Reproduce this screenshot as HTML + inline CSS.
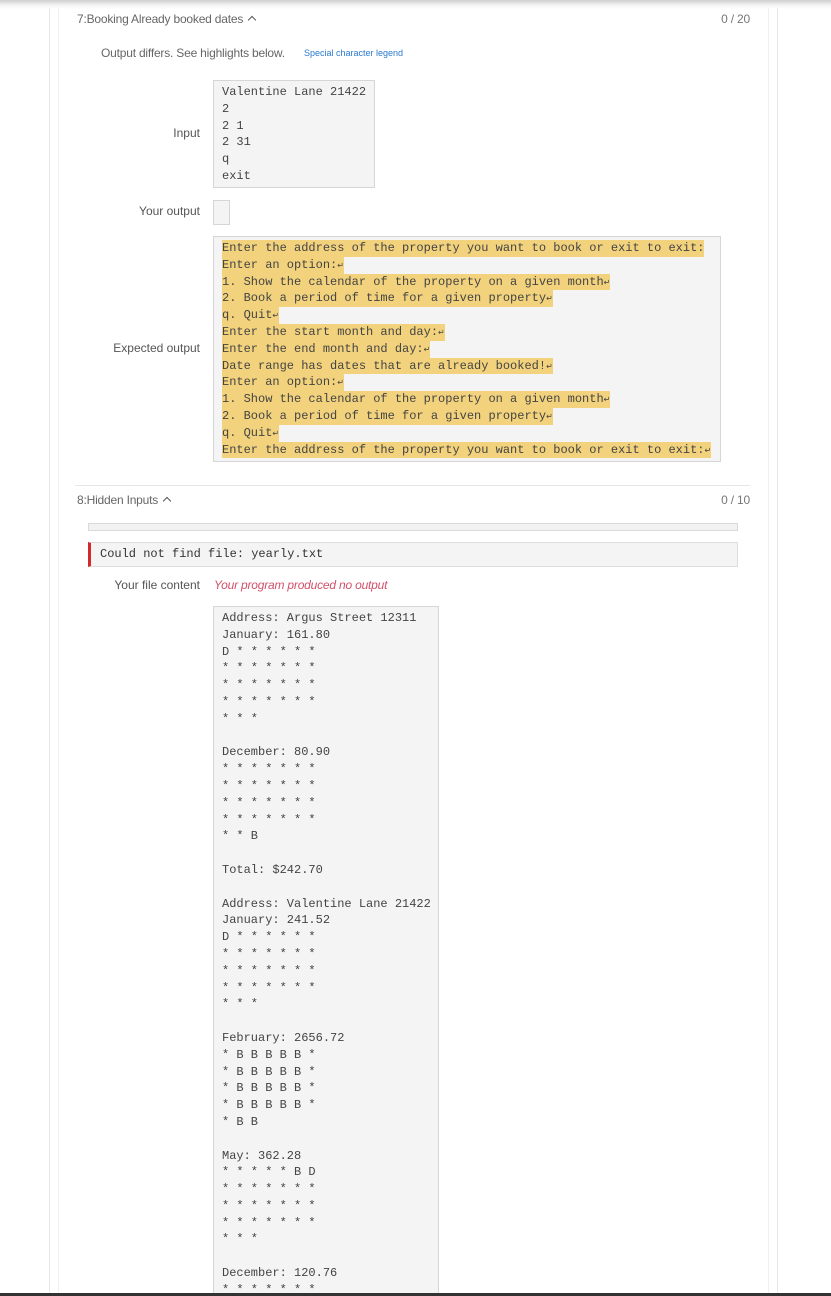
<!DOCTYPE html>
<html><head><meta charset="utf-8"><style>
*{margin:0;padding:0;box-sizing:border-box}
html,body{width:831px;height:1296px;overflow:hidden;background:#fff;font-family:"Liberation Sans",sans-serif;color:#666;position:relative}
.abs{position:absolute}
.vl{position:absolute;top:8px;height:1288px;width:1px;background:#e8e8e8}
.topsh{position:absolute;left:0;top:0;width:831px;height:9px;background:linear-gradient(#cfcfcf,#f4f4f4 60%,#fff)}
.bot{position:absolute;left:0;top:1293px;width:831px;height:3px;background:#333;z-index:5}
.lbl{position:absolute;font-size:12px;color:#555;text-align:right;width:200px;left:0}
.box{position:absolute;background:#f4f4f4;border:1px solid #d6d6d6;padding:3px 8px;font-family:"Liberation Mono","DejaVu Sans Mono",monospace;font-size:12px;line-height:16.8px;color:#444;white-space:pre;overflow:hidden}
.hl{background:#f2d27c;display:inline-block;height:16.8px}
.rt{font-family:"DejaVu Sans",sans-serif;font-size:8px}
.hdr{position:absolute;font-size:12px;color:#666;letter-spacing:-0.2px}
.car{display:inline-block;width:6px;height:6px;border-left:1.6px solid #555;border-top:1.6px solid #555;transform:rotate(45deg);margin-left:6px;position:relative;top:0px}
</style></head><body>
<div class="topsh"></div>
<div class="vl" style="left:49px"></div>
<div class="vl" style="left:58px;background:#f0f0f0"></div>
<div class="vl" style="left:768px;background:#f0f0f0"></div>
<div class="vl" style="left:777px"></div>

<div class="hdr" style="left:77px;top:12px">7:Booking Already booked dates<span class="car"></span></div>
<div class="hdr" style="left:690px;width:60px;text-align:right;top:12px;color:#777">0 / 20</div>
<div class="abs" style="left:101px;top:46px;font-size:12px;color:#666;letter-spacing:-0.2px">Output differs. See highlights below.</div>
<div class="abs" style="left:304px;top:48px;font-size:9px;color:#2a7ad0">Special character legend</div>

<div class="lbl" style="top:126px">Input</div>
<div class="box" style="left:213px;top:80px;width:162px;height:108px">Valentine Lane 21422
2
2 1
2 31
q
exit</div>

<div class="lbl" style="top:204px">Your output</div>
<div class="box" style="left:213px;top:200px;width:17px;height:25px;padding:0"></div>

<div class="lbl" style="top:341px">Expected output</div>
<div class="box" style="left:213px;top:236px;width:508px;height:226px"><span class="hl">Enter the address of the property you want to book or exit to exit:</span>
<span class="hl">Enter an option:<span class="rt">↵</span></span>
<span class="hl">1. Show the calendar of the property on a given month<span class="rt">↵</span></span>
<span class="hl">2. Book a period of time for a given property<span class="rt">↵</span></span>
<span class="hl">q. Quit<span class="rt">↵</span></span>
<span class="hl">Enter the start month and day:<span class="rt">↵</span></span>
<span class="hl">Enter the end month and day:<span class="rt">↵</span></span>
<span class="hl">Date range has dates that are already booked!<span class="rt">↵</span></span>
<span class="hl">Enter an option:<span class="rt">↵</span></span>
<span class="hl">1. Show the calendar of the property on a given month<span class="rt">↵</span></span>
<span class="hl">2. Book a period of time for a given property<span class="rt">↵</span></span>
<span class="hl">q. Quit<span class="rt">↵</span></span>
<span class="hl">Enter the address of the property you want to book or exit to exit:<span class="rt">↵</span></span></div>

<div class="abs" style="left:75px;top:485px;width:675px;height:1px;background:#e6e6e6"></div>
<div class="hdr" style="left:77px;top:493px">8:Hidden Inputs<span class="car"></span></div>
<div class="hdr" style="left:690px;width:60px;text-align:right;top:493px;color:#777">0 / 10</div>
<div class="abs" style="left:88px;top:523px;width:650px;height:8px;background:#f2f2f2;border:1px solid #d9d9d9"></div>
<div class="abs" style="left:88px;top:542px;width:650px;height:25px;background:#f4f4f4;border:1px solid #ddd;border-left:3px solid #d02a2a;font-family:'Liberation Mono',monospace;font-size:12px;color:#333;padding:4px 0 0 9px">Could not find file: yearly.txt</div>
<div class="lbl" style="top:578px">Your file content</div>
<div class="abs" style="left:214px;top:578px;font-size:12px;font-style:italic;color:#d0506a;letter-spacing:-0.2px">Your program produced no output</div>

<div class="box" style="left:213px;top:606px;width:226px;height:690px">Address: Argus Street 12311
January: 161.80
D * * * * * *
* * * * * * *
* * * * * * *
* * * * * * *
* * *

December: 80.90
* * * * * * *
* * * * * * *
* * * * * * *
* * * * * * *
* * B

Total: $242.70

Address: Valentine Lane 21422
January: 241.52
D * * * * * *
* * * * * * *
* * * * * * *
* * * * * * *
* * *

February: 2656.72
* B B B B B *
* B B B B B *
* B B B B B *
* B B B B B *
* B B

May: 362.28
* * * * * B D
* * * * * * *
* * * * * * *
* * * * * * *
* * *

December: 120.76
* * * * * * *</div>
<div class="bot"></div>
</body></html>
